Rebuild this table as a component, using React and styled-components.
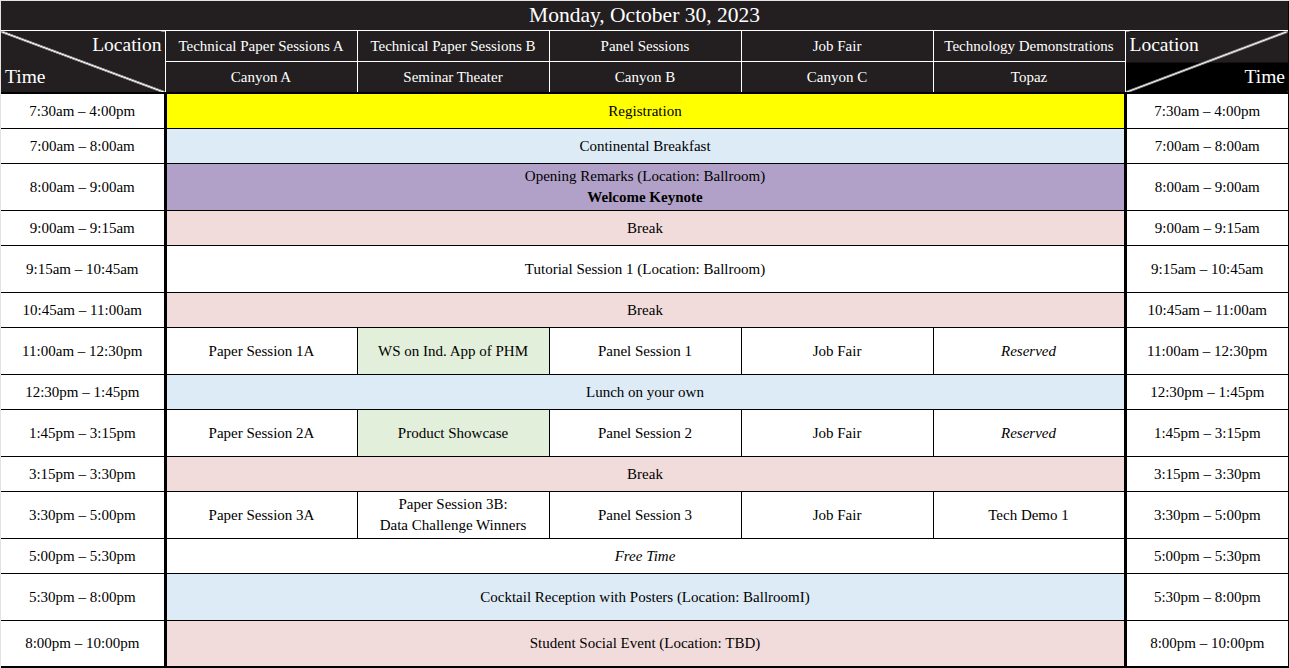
import React from "react";
import styled, { createGlobalStyle } from "styled-components";

const GlobalStyle = createGlobalStyle`
  html, body {
    margin: 0;
    padding: 0;
    background: #e3e3e3;
  }
  body {
    padding: 1px 0 0 1px;
  }
  th, td {
    font-family: "Liberation Serif", "Times New Roman", serif;
  }
`;

const fills = {
  white: "#ffffff",
  yellow: "#ffff00",
  blue: "#ddebf6",
  purple: "#b1a0c7",
  pink: "#f2dcdb",
  green: "#e2efda",
};

const Schedule = styled.table`
  width: 1288px;
  border-collapse: collapse;
  table-layout: fixed;
  font-family: "Liberation Serif", "Times New Roman", serif;
  font-size: 15px;
  color: #000;
  background: #fff;
  border-right: 2px solid #000;
  border-bottom: 2px solid #000;
`;

const TitleCell = styled.th`
  height: 29px;
  padding: 0;
  background: #231f20;
  color: #fff;
  font-size: 21.5px;
  font-weight: normal;
  text-align: center;
  border-bottom: 1px solid #fff;
`;

const HeadCell = styled.th`
  height: 30px;
  padding: 0;
  background: #231f20;
  color: #fff;
  font-weight: normal;
  font-size: 15px;
  text-align: center;
  border: 1px solid #fff;
  border-bottom: 0;
`;

const CornerCell = styled.th`
  padding: 0;
  height: 60px;
  font-weight: normal;
  color: #fff;
  border-top: 1px solid #fff;
  border-right: ${(p) => (p.$side === "left" ? "1px solid #fff" : "0")};
  background: ${(p) =>
    p.$side === "left"
      ? `linear-gradient(to top right, transparent calc(50% - 1.2px), #fff calc(50% - 0.6px), #fff calc(50% + 0.6px), transparent calc(50% + 1.2px)), #231f20`
      : `linear-gradient(to bottom right, transparent calc(50% - 1.2px), #fff calc(50% - 0.6px), #fff calc(50% + 0.6px), transparent calc(50% + 1.2px)), linear-gradient(to bottom, #231f20 50%, #000 50%)`};
`;

const CornerInner = styled.div`
  height: 60px;
  display: flex;
  flex-direction: column;
  justify-content: space-between;
  font-size: 19.5px;
  line-height: 24px;
`;

const CornerLabel = styled.span`
  text-align: ${(p) => p.$align};
  padding: 0 3px 0 4px;
  margin-top: ${(p) => (p.$top ? "1px" : "0")};
  margin-bottom: ${(p) => (p.$top ? "0" : "3px")};
`;

const TimeCell = styled.td`
  height: ${(p) => p.$h}px;
  padding: 0;
  text-align: center;
  background: #fff;
  border-top: ${(p) => (p.$first ? "2px" : "1px")} solid #000;
  border-bottom: 1px solid #000;
  border-left: ${(p) => (p.$side === "right" ? "3px solid #000" : "0")};
  border-right: ${(p) => (p.$side === "left" ? "3px solid #000" : "2px solid #000")};
  white-space: nowrap;
`;

const EventCell = styled.td`
  height: ${(p) => p.$h}px;
  padding: 0;
  text-align: center;
  line-height: 21px;
  background: ${(p) => fills[p.$fill || "white"]};
  border: 1px solid #000;
  border-top-width: ${(p) => (p.$first ? "2px" : "1px")};
  font-style: ${(p) => (p.$italic ? "italic" : "normal")};
`;

const columns = [
  { title: "Technical Paper Sessions A", room: "Canyon A" },
  { title: "Technical Paper Sessions B", room: "Seminar Theater" },
  { title: "Panel Sessions", room: "Canyon B" },
  { title: "Job Fair", room: "Canyon C" },
  { title: "Technology Demonstrations", room: "Topaz" },
];

const rows = [
  { time: "7:30am – 4:00pm", h: 34, span: { fill: "yellow", text: "Registration" } },
  { time: "7:00am – 8:00am", h: 34, span: { fill: "blue", text: "Continental Breakfast" } },
  {
    time: "8:00am – 9:00am",
    h: 46,
    span: {
      fill: "purple",
      text: (
        <>
          Opening Remarks (Location: Ballroom)
          <br />
          <b>Welcome Keynote</b>
        </>
      ),
    },
  },
  { time: "9:00am – 9:15am", h: 34, span: { fill: "pink", text: "Break" } },
  { time: "9:15am – 10:45am", h: 46, span: { fill: "white", text: "Tutorial Session 1 (Location: Ballroom)" } },
  { time: "10:45am – 11:00am", h: 34, span: { fill: "pink", text: "Break" } },
  {
    time: "11:00am – 12:30pm",
    h: 46,
    cells: [
      { text: "Paper Session 1A" },
      { text: "WS on Ind. App of PHM", fill: "green" },
      { text: "Panel Session 1" },
      { text: "Job Fair" },
      { text: "Reserved", italic: true },
    ],
  },
  { time: "12:30pm – 1:45pm", h: 34, span: { fill: "blue", text: "Lunch on your own" } },
  {
    time: "1:45pm – 3:15pm",
    h: 46,
    cells: [
      { text: "Paper Session 2A" },
      { text: "Product Showcase", fill: "green" },
      { text: "Panel Session 2" },
      { text: "Job Fair" },
      { text: "Reserved", italic: true },
    ],
  },
  { time: "3:15pm – 3:30pm", h: 34, span: { fill: "pink", text: "Break" } },
  {
    time: "3:30pm – 5:00pm",
    h: 46,
    cells: [
      { text: "Paper Session 3A" },
      {
        text: (
          <>
            Paper Session 3B:
            <br />
            Data Challenge Winners
          </>
        ),
      },
      { text: "Panel Session 3" },
      { text: "Job Fair" },
      { text: "Tech Demo 1" },
    ],
  },
  { time: "5:00pm – 5:30pm", h: 34, span: { fill: "white", text: "Free Time", italic: true } },
  { time: "5:30pm – 8:00pm", h: 46, span: { fill: "blue", text: "Cocktail Reception with Posters (Location: BallroomI)" } },
  { time: "8:00pm – 10:00pm", h: 45, span: { fill: "pink", text: "Student Social Event (Location: TBD)" } },
];

export default function App() {
  return (
    <>
      <GlobalStyle />
      <Schedule>
        <colgroup>
          <col style={{ width: 164 }} />
          {columns.map((c) => (
            <col key={c.title} style={{ width: 192 }} />
          ))}
          <col style={{ width: 164 }} />
        </colgroup>
        <thead>
          <tr>
            <TitleCell colSpan={7}>Monday, October 30, 2023</TitleCell>
          </tr>
          <tr>
            <CornerCell $side="left" rowSpan={2}>
              <CornerInner>
                <CornerLabel $align="right" $top>Location</CornerLabel>
                <CornerLabel $align="left">Time</CornerLabel>
              </CornerInner>
            </CornerCell>
            {columns.map((c) => (
              <HeadCell key={c.title}>{c.title}</HeadCell>
            ))}
            <CornerCell $side="right" rowSpan={2}>
              <CornerInner>
                <CornerLabel $align="left" $top>Location</CornerLabel>
                <CornerLabel $align="right">Time</CornerLabel>
              </CornerInner>
            </CornerCell>
          </tr>
          <tr>
            {columns.map((c) => (
              <HeadCell key={c.room}>{c.room}</HeadCell>
            ))}
          </tr>
        </thead>
        <tbody>
          {rows.map((r, i) => (
            <tr key={i}>
              <TimeCell $h={r.h} $side="left" $first={i === 0}>{r.time}</TimeCell>
              {r.span ? (
                <EventCell colSpan={5} $h={r.h} $fill={r.span.fill} $italic={r.span.italic} $first={i === 0}>
                  {r.span.text}
                </EventCell>
              ) : (
                r.cells.map((c, j) => (
                  <EventCell key={j} $h={r.h} $fill={c.fill} $italic={c.italic}>
                    {c.text}
                  </EventCell>
                ))
              )}
              <TimeCell $h={r.h} $side="right" $first={i === 0}>{r.time}</TimeCell>
            </tr>
          ))}
        </tbody>
      </Schedule>
    </>
  );
}
